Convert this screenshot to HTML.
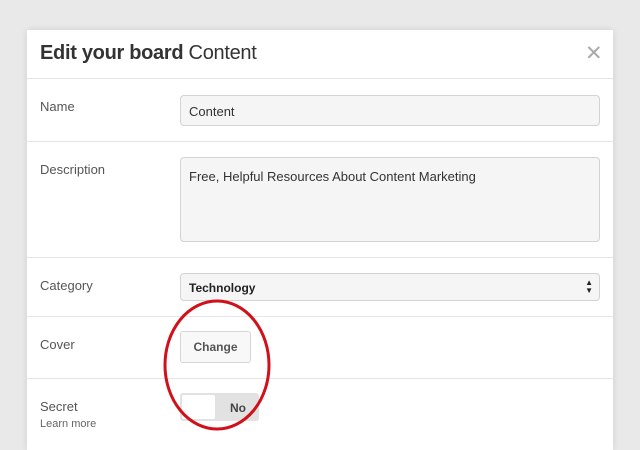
<!DOCTYPE html><html><head><style>
body{margin:0;width:640px;height:444px;background:#e8e9e8;font-family:"Liberation Sans",sans-serif;position:relative;overflow:hidden}
.m{position:absolute;left:27px;top:30px;width:586px;height:420px;background:#fff;box-shadow:0 0 6px rgba(0,0,0,.12)}
.a{position:absolute}
.hr{position:absolute;left:27px;width:586px;height:1px;background:#e6e6e6}
.lb{position:absolute;left:40px;font-size:13px;color:#555}
.in{position:absolute;left:180px;width:420px;background:#f5f5f5;border:1px solid #d3d3d3;border-radius:4px;box-sizing:border-box;font-size:13px;color:#333}
</style></head><body>
<div class="m"></div>
<div class="a" style="left:40px;top:42px;font-size:20px;color:#333;letter-spacing:-0.3px"><b>Edit your board</b> Content</div>
<div class="a" style="left:585px;top:41px;font-size:21px;color:#aaa">✕</div>
<div class="hr" style="top:78px"></div>
<div class="lb" style="top:99px">Name</div>
<div class="in" style="top:95px;height:31px;padding:8px 8px">Content</div>
<div class="hr" style="top:141px"></div>
<div class="lb" style="top:162px">Description</div>
<div class="in" style="top:157px;height:85px;padding:11px 8px">Free, Helpful Resources About Content Marketing</div>
<div class="hr" style="top:257px"></div>
<div class="lb" style="top:278px">Category</div>
<div class="in" style="top:273px;height:28px;padding:7px 8px;font-size:12px;font-weight:bold;color:#222">Technology<span style="position:absolute;right:6px;top:5px;font-size:8px;line-height:8px">▲<br>▼</span></div>
<div class="hr" style="top:316px"></div>
<div class="lb" style="top:337px">Cover</div>
<div class="a" style="left:180px;top:331px;width:71px;height:32px;box-sizing:border-box;border:1px solid #d6d6d6;border-radius:3px;background:#f8f8f8;font-size:12px;font-weight:bold;color:#555;text-align:center;line-height:30px">Change</div>
<div class="hr" style="top:378px"></div>
<div class="lb" style="top:399px">Secret</div>
<div class="a" style="left:40px;top:418px;font-size:11px;color:#666">Learn more</div>
<div class="a" style="left:180px;top:393px;width:79px;height:28px;background:#e2e2e2;border-radius:3px"></div>
<div class="a" style="left:182px;top:395px;width:33px;height:24px;background:#fff;border-radius:2px"></div>
<div class="a" style="left:230px;top:401px;font-size:12px;font-weight:bold;color:#444">No</div>
<svg class="a" style="left:0;top:0" width="640" height="444"><ellipse cx="217" cy="365" rx="52" ry="64" fill="none" stroke="#d0101a" stroke-width="3"/></svg>
</body></html>
